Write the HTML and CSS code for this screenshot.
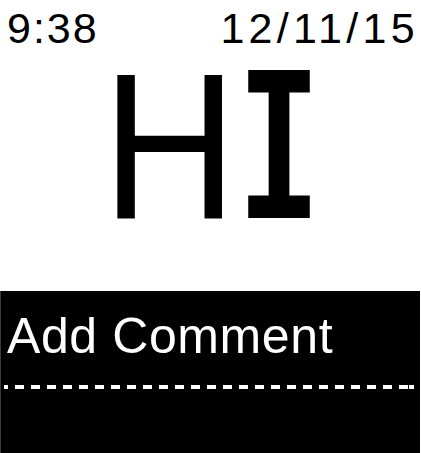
FILE: index.html
```html
<!DOCTYPE html>
<html>
<head>
<meta charset="utf-8">
<link rel="stylesheet" href="styles.css">
</head>
<body>
<div class="screen">
  <div class="status">
    <span class="time">9:38</span>
    <span class="date">12/11/15</span>
  </div>
  <div class="reading"><span class="glyph-h">H</span><span class="glyph-i">I</span></div>
  <div class="panel">
    <div class="label">Add Comment</div>
    <div class="dashes"></div>
  </div>
</div>
</body>
</html>
```

FILE: styles.css
```css
html, body {
  margin: 0;
  padding: 0;
  background: #fff;
}
.screen {
  width: 421px;
  height: 453px;
  display: flex;
  flex-direction: column;
  overflow: hidden;
}
.status {
  display: flex;
  justify-content: space-between;
  padding: 7px 6px 0 7px;
  font-family: "Liberation Sans", Arial, sans-serif;
  font-size: 43px;
  line-height: 43px;
  color: #000;
}
.time {
  letter-spacing: 2px;
}
.date {
  letter-spacing: 4.3px;
  margin-right: -4px;
}
.reading {
  display: flex;
  align-items: baseline;
  height: 200px;
  line-height: 200px;
  margin-top: -6px;
  color: #000;
  padding-left: 102px;
}
.glyph-h {
  display: inline-block;
  font-family: "Liberation Sans", Arial, sans-serif;
  font-size: 208px;
  width: 140px;
  transform: scaleX(0.9);
  transform-origin: 0 0;
}
.glyph-i {
  display: inline-block;
  font-family: Inter, "DejaVu Sans", sans-serif;
  font-weight: 600;
  font-feature-settings: "cv08" 1;
  font-size: 204px;
  transform: scaleX(0.78);
  transform-origin: 0 0;
}
.panel {
  margin-top: auto;
  width: 419px;
  height: 162px;
  background: #000;
  border-left: 1px solid #3a3a3a;
  display: flex;
  flex-direction: column;
}
.label {
  font-family: "Liberation Sans", Arial, sans-serif;
  font-size: 50px;
  line-height: 50px;
  letter-spacing: 0.6px;
  color: #fff;
  padding: 20px 0 0 6px;
}
.dashes {
  margin: 24px 0 0 3px;
  width: 410px;
  height: 4px;
  background: repeating-linear-gradient(90deg, #fff 0 9px, transparent 9px 16px);
  background-position: -5px 0;
}
```
